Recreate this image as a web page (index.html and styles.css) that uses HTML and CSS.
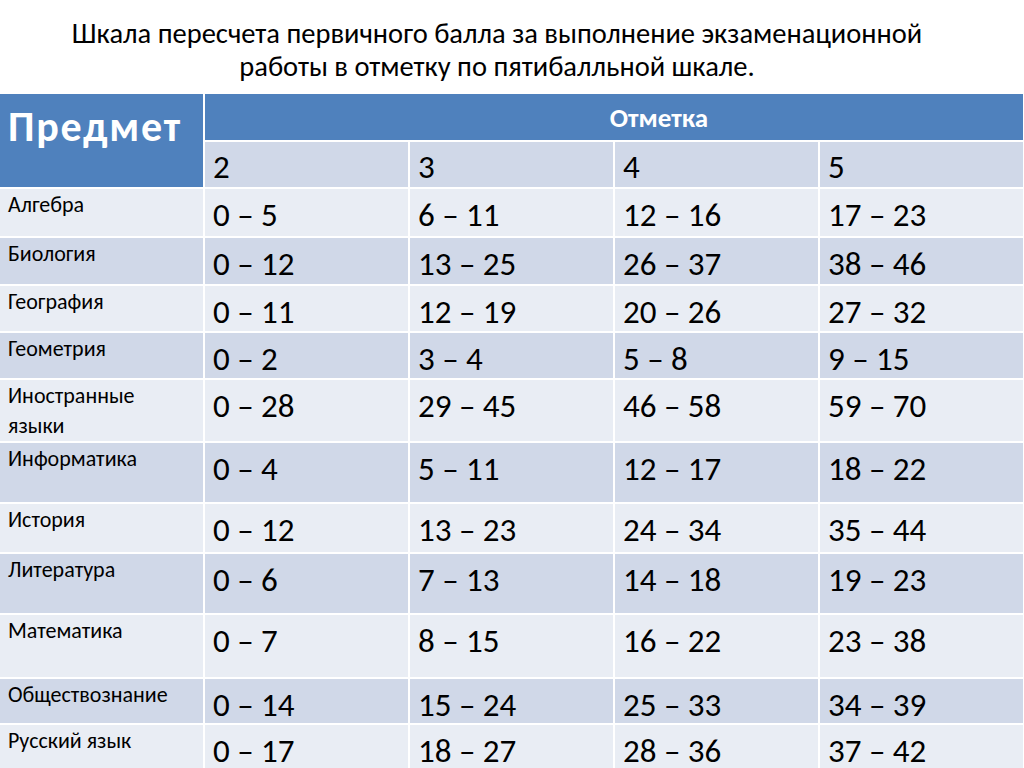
FILE: index.html
```html
<!DOCTYPE html>
<html lang="ru">
<head>
<meta charset="utf-8">
<title>Шкала пересчета</title>
<link rel="stylesheet" href="styles.css">
</head>
<body>
<div class="slide">
  <h1 class="title">Шкала пересчета первичного балла за выполнение экзаменационной<br>работы в отметку по пятибалльной шкале.</h1>
  <table class="scale">
    <colgroup>
      <col class="c-subj"><col class="c-num"><col class="c-num"><col class="c-num"><col class="c-last">
    </colgroup>
    <thead>
      <tr class="h1">
        <th class="subj-head" rowspan="2">Предмет</th>
        <th class="mark-head" colspan="4">Отметка</th>
      </tr>
      <tr class="h2">
        <td>2</td><td>3</td><td>4</td><td>5</td>
      </tr>
    </thead>
    <tbody>
      <tr class="light"><th>Алгебра</th><td>0 – 5</td><td>6 – 11</td><td>12 – 16</td><td>17 – 23</td></tr>
      <tr class="dark"><th>Биология</th><td>0 – 12</td><td>13 – 25</td><td>26 – 37</td><td>38 – 46</td></tr>
      <tr class="light"><th>География</th><td>0 – 11</td><td>12 – 19</td><td>20 – 26</td><td>27 – 32</td></tr>
      <tr class="dark"><th>Геометрия</th><td>0 – 2</td><td>3 – 4</td><td>5 – 8</td><td>9 – 15</td></tr>
      <tr class="light"><th>Иностранные<br>языки</th><td>0 – 28</td><td>29 – 45</td><td>46 – 58</td><td>59 – 70</td></tr>
      <tr class="dark"><th>Информатика</th><td>0 – 4</td><td>5 – 11</td><td>12 – 17</td><td>18 – 22</td></tr>
      <tr class="light"><th>История</th><td>0 – 12</td><td>13 – 23</td><td>24 – 34</td><td>35 – 44</td></tr>
      <tr class="dark"><th>Литература</th><td>0 – 6</td><td>7 – 13</td><td>14 – 18</td><td>19 – 23</td></tr>
      <tr class="light"><th>Математика</th><td>0 – 7</td><td>8 – 15</td><td>16 – 22</td><td>23 – 38</td></tr>
      <tr class="dark"><th>Обществознание</th><td>0 – 14</td><td>15 – 24</td><td>25 – 33</td><td>34 – 39</td></tr>
      <tr class="light"><th>Русский язык</th><td>0 – 17</td><td>18 – 27</td><td>28 – 36</td><td>37 – 42</td></tr>
    </tbody>
  </table>
</div>
</body>
</html>
```

FILE: styles.css
```css
html, body {
  margin: 0;
  padding: 0;
  background: #ffffff;
}
body {
  width: 1024px;
  height: 768px;
  overflow: hidden;
  font-family: "Carlito", "Lato", "Open Sans", sans-serif;
  color: #000;
}
.slide {
  width: 1024px;
  height: 768px;
}
.title {
  margin: 0;
  padding: 17px 30px 0 0;
  height: 76px;
  box-sizing: border-box;
  font-size: 28.5px;
  font-weight: normal;
  line-height: 33px;
  text-align: center;
}
.scale {
  width: 1023px;
  border-collapse: collapse;
  table-layout: fixed;
  margin-top: 18px;
}
.c-subj { width: 204px; }
.c-num { width: 205px; }
.c-last { width: 204px; }
.scale th, .scale td {
  border: 2px solid #ffffff;
  padding: 0;
  text-align: left;
  vertical-align: top;
}
.scale tr > :first-child { border-left: 0; }
.scale tr > :last-child { border-right: 0; }
.scale .h1 { height: 47px; }
.scale .subj-head {
  background: #4f81bd;
  color: #fff;
  font-size: 42px;
  letter-spacing: 1.8px;
  font-weight: bold;
  line-height: 50px;
  padding: 8px 0 0 8px;
  border-top: 0;
}
.scale .mark-head {
  background: #4f81bd;
  color: #fff;
  font-size: 27px;
  font-weight: bold;
  text-align: center;
  vertical-align: middle;
  padding: 0 0 0 90px;
  border-top: 0;
}
.scale .h2 { height: 47px; }
.scale .h2 td {
  background: #d0d8e8;
  font-size: 33px;
  line-height: 34px;
  padding: 8px 0 0 8px;
}
.scale tbody th {
  font-size: 22px;
  font-weight: normal;
  line-height: 30px;
  padding: 1px 0 0 8px;
}
.scale tbody td {
  font-size: 33px;
  line-height: 34px;
  padding: 9px 0 0 8px;
}
.scale tbody tr:nth-child(1) { height: 49px; }
.scale tbody tr:nth-child(2) { height: 48px; }
.scale tbody tr:nth-child(3) { height: 47px; }
.scale tbody tr:nth-child(4) { height: 47px; }
.scale tbody tr:nth-child(5) { height: 63px; }
.scale tbody tr:nth-child(6) { height: 61px; }
.scale tbody tr:nth-child(7) { height: 50px; }
.scale tbody tr:nth-child(8) { height: 61px; }
.scale tbody tr:nth-child(9) { height: 64px; }
.scale tbody tr:nth-child(10) { height: 46px; }
.scale tbody tr:nth-child(11) { height: 44px; }
.scale .light th, .scale .light td { background: #e9edf4; }
.scale .dark th, .scale .dark td { background: #d0d8e8; }
```
